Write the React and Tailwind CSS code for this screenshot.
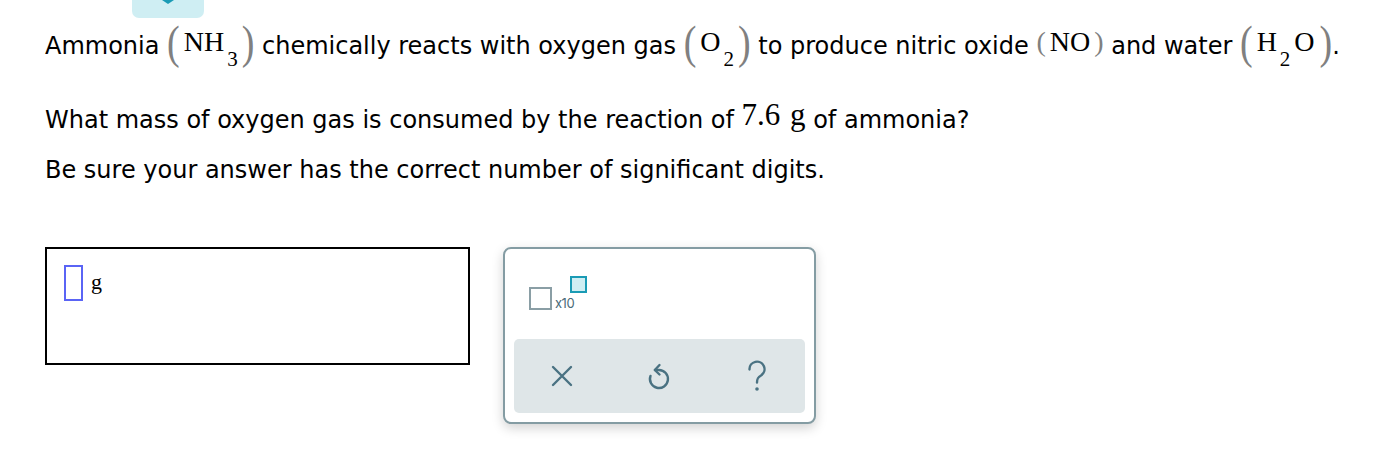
import React from "react";

const P = ({ c, cls = "" }) => (
  <span className={`inline-block font-['Liberation_Serif'] text-[38px] text-[#808080] leading-none align-[-1px] scale-y-[1.2] ${cls}`}>{c}</span>
);

const M = ({ children }) => (
  <span className="font-['Liberation_Serif'] text-[28px] leading-none align-[3px]">{children}</span>
);

const Sub = ({ children }) => (
  <span className="font-['Liberation_Serif'] text-[21px] leading-none align-[-12px] ml-[3px] mr-[4px]">{children}</span>
);

export default function App() {
  return (
    <div className="relative w-[1392px] h-[470px] bg-white overflow-hidden font-['DejaVu_Sans',sans-serif] text-[24px] text-black">
      <div className="absolute left-[132px] top-0 w-[72px] h-[18px] bg-[#cfeef3] rounded-b-[7px] flex justify-center">
        <svg width="12" height="5" viewBox="0 0 12 5">
          <path d="M0 0 L6 4 L12 0 Z" fill="#1a9bb5" />
        </svg>
      </div>

      <div className="pl-[45px] pt-[23px]">
        <p className="h-[40px] leading-[40px] whitespace-nowrap">
          Ammonia <P c="(" cls="mr-[4px]" />
          <M>NH</M>
          <Sub>3</Sub>
          <P c=")" /> chemically reacts with oxygen gas <P c="(" cls="mr-[4px]" />
          <M>O</M>
          <Sub>2</Sub>
          <P c=")" /> to produce nitric oxide{" "}
          <span className="font-['Liberation_Serif'] text-[28px] leading-none align-[3px]">
            <span className="text-[#808080] mr-[4px]">(</span>NO<span className="text-[#808080] ml-[4px]">)</span>
          </span>{" "}
          and water <P c="(" cls="mr-[4px]" />
          <M>H</M>
          <Sub>2</Sub>
          <M>O</M>
          <P c=")" cls="ml-[5px]" />.
        </p>

        <p className="mt-[36px] h-[30px] leading-[30px] whitespace-nowrap">
          What mass of oxygen gas is consumed by the reaction of{" "}
          <span className="font-['Liberation_Serif'] text-[31px] leading-none align-[3px]">
            7.6 <span className="ml-[2px]">g</span>
          </span>{" "}
          of ammonia?
        </p>

        <p className="mt-[26px] h-[30px] leading-[30px] whitespace-nowrap">
          Be sure your answer has the correct number of significant digits.
        </p>

        <div className="mt-[62px] flex items-start">
          <div className="w-[425px] h-[118px] border-2 border-black pl-[17px] pt-[16px] flex items-start">
            <div className="w-[19px] h-[36px] border-2 border-[#5a64f5]" />
            <span className="font-['Liberation_Serif'] text-[22px] ml-[8px] mt-[6px] leading-none">g</span>
          </div>

          <div className="ml-[33px] w-[313px] h-[177px] border-2 border-[#849ca3] rounded-[8px] bg-white shadow-[0_4px_12px_rgba(0,0,0,0.18)] p-[9px] flex flex-col">
            <div className="h-[81px] pl-[15px] pt-[18px] flex items-start">
              <div className="mt-[11px] w-[23px] h-[23px] border-2 border-[#8a9ea5]" />
              <div className="ml-[3px] flex flex-col items-start">
                <div className="ml-[15px] w-[17px] h-[17px] bg-[#cfeef3] border-2 border-[#1a9bb5]" />
                <span className="mt-[4px] text-[13px] font-['Inter',sans-serif] text-[#4a6a78] leading-none tracking-[-0.5px]">x10</span>
              </div>
            </div>
            <div className="flex-1 bg-[#dfe6e8] rounded-[5px] flex items-center justify-around">
              <svg width="22" height="22" viewBox="0 0 22 22">
                <path d="M2 2 L20 20 M20 2 L2 20" stroke="#4a7282" strokeWidth="2.4" strokeLinecap="round" />
              </svg>
              <svg width="24" height="28" viewBox="0 0 24 28">
                <path d="M3.5 13.9 A9 9 0 1 0 12 8 L8 8" fill="none" stroke="#4a7282" strokeWidth="2.4" strokeLinecap="round" />
                <path d="M12.5 3 L7.8 8 L12.5 12.5" fill="none" stroke="#4a7282" strokeWidth="2.4" strokeLinecap="round" strokeLinejoin="round" />
              </svg>
              <svg width="22" height="32" viewBox="0 0 22 32">
                <path d="M3.5 9.5 A7.5 7.5 0 1 1 15 15.5 C12 17.2 11 18.5 11 22.5" fill="none" stroke="#4a7282" strokeWidth="2.4" strokeLinecap="round" />
                <circle cx="11" cy="29" r="1.8" fill="#4a7282" />
              </svg>
            </div>
          </div>
        </div>
      </div>
    </div>
  );
}
